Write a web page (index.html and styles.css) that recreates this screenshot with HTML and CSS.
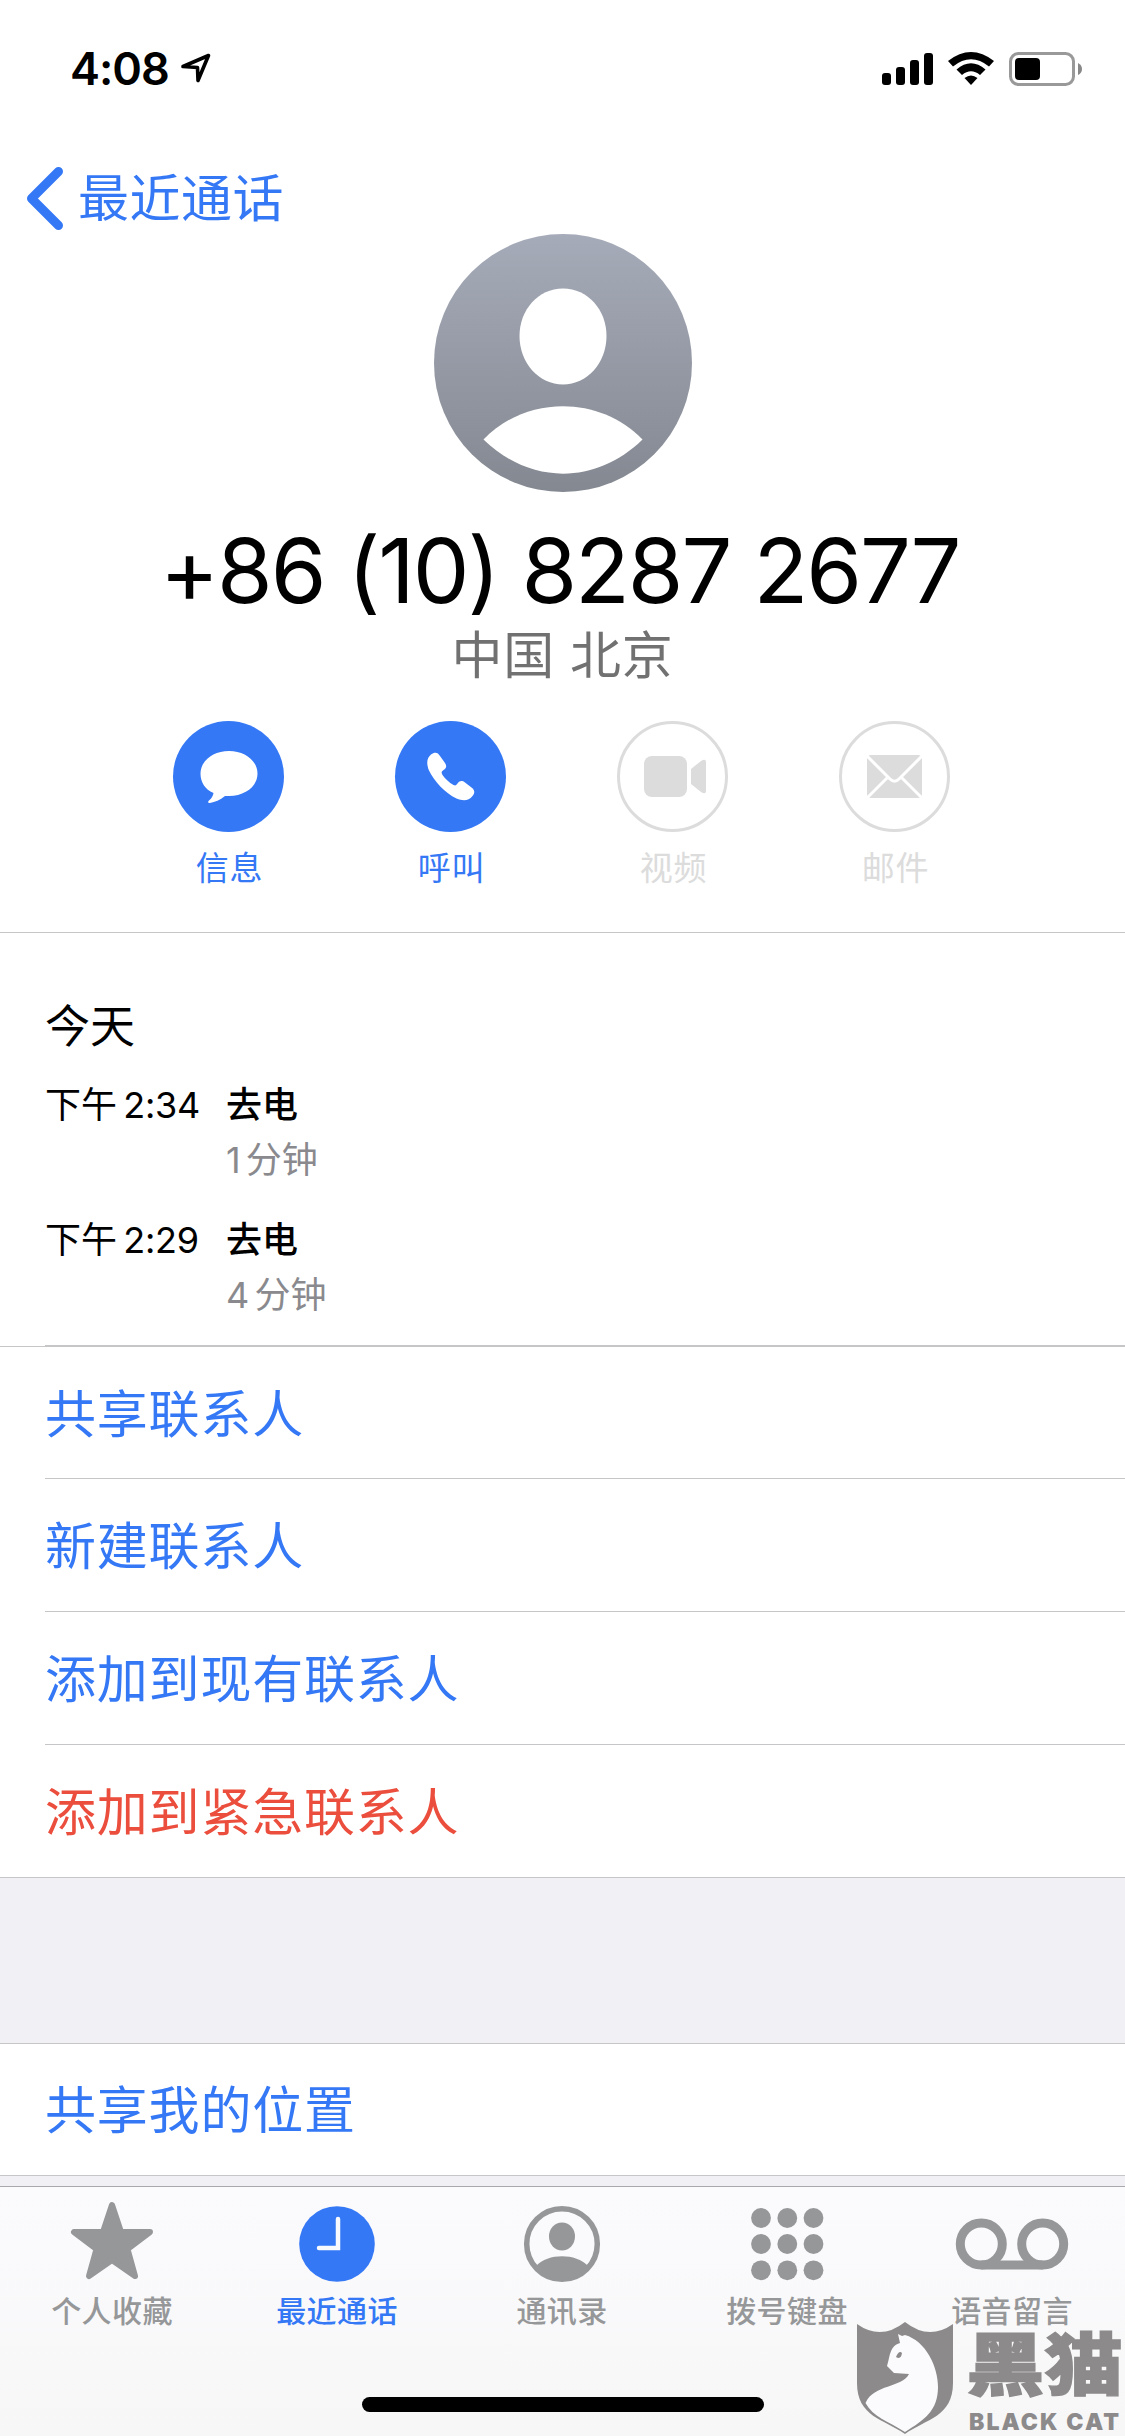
FILE: index.html
```
<!DOCTYPE html>
<html lang="zh-CN">
<head>
    <meta charset="UTF-8">
    <meta name="viewport" content="width=device-width, initial-scale=1.0">
    <title>最近通话</title>
    <link rel="stylesheet" href="styles.css">
</head>
<body>
    <div class="status-bar">
        <div class="clock">4:08</div>
        <svg class="location" width="32" height="32" viewBox="0 0 32 32">
            <path d="M3 14.5 L28.5 3.500 L18 28.500 L17.5 15.500 Z" fill="none" stroke="#000" stroke-width="3.6" stroke-linejoin="round"/>
        </svg>
        <svg class="indicators" width="202" height="36" viewBox="880 50 202 36">
            <rect x="882" y="73" width="9" height="12" rx="3"/>
            <rect x="896" y="67" width="9" height="18" rx="3"/>
            <rect x="910" y="60" width="9" height="25" rx="3"/>
            <rect x="924" y="53" width="9" height="32" rx="3"/>
            <path d="M948 61 Q971 43 994 61 L989 66.500 Q971 52 953 66.500 Z"/>
            <path d="M956.500 69.500 Q971 57 985.500 69.500 L980 75 Q971 67.500 962 75 Z"/>
            <path d="M964.500 78 Q971 73 977.500 78 L971 85 Z"/>
            <rect x="1010.500" y="53.500" width="63" height="31" rx="8" fill="none" stroke="#999" stroke-width="3"/>
            <rect x="1015" y="58" width="25" height="22" rx="4"/>
            <path d="M1078 63 Q1082 65 1082 69 Q1082 73 1078 75 Z" fill="#888"/>
        </svg>
    </div>

    <div class="header">
        <div class="back">
            <svg width="38" height="64" viewBox="0 0 38 64">
                <path d="M32.500 5.500 L5.500 32.500 L32.500 59.500" fill="none" stroke="#3478f6" stroke-width="9" stroke-linecap="round" stroke-linejoin="round"/>
            </svg>
            <span>最近通话</span>
        </div>

        <svg class="avatar" width="258" height="258" viewBox="0 0 258 258">
            <defs>
                <linearGradient id="avatarFill" x1="0" y1="0" x2="0" y2="1">
                    <stop offset="0" stop-color="#a6abb9"/>
                    <stop offset="1" stop-color="#848891"/>
                </linearGradient>
            </defs>
            <circle cx="129" cy="129" r="129" fill="url(#avatarFill)"/>
            <path d="M129 54.500 C154 54.500 172.500 76 172.500 102 C172.500 129 153 150.500 129 150.500 C105 150.500 85.500 129 85.500 102 C85.500 76 104 54.500 129 54.500 Z" fill="#fff"/>
            <path d="M49.500 205.500 C92 161 166 161 208.500 205.500 C162 251 96 251 49.500 205.500 Z" fill="#fff"/>
        </svg>

        <h1 class="number">+86 (10) 8287 2677</h1>
        <div class="region">中国 北京</div>

        <div class="actions">
            <div class="action">
                <svg width="111" height="111" viewBox="0 0 111 111">
                    <circle cx="55.500" cy="55.500" r="55.500" fill="#3478f6"/>
                    <path d="M56 30 C72 30 84.500 40 84.500 52.500 C84.500 65.500 72 75 56 75 L52 75 C47 79 42 81 37 82 C35 82 34.500 81 36 79.500 C39 77 40 74.500 40.500 72 C32 68.500 27.500 61 27.500 52.500 C27.500 40 40 30 56 30 Z" fill="#fff"/>
                </svg>
                <span>信息</span>
            </div>
            <div class="action">
                <svg width="111" height="111" viewBox="0 0 111 111">
                    <circle cx="55.500" cy="55.500" r="55.500" fill="#3478f6"/>
                    <path d="M36 33.500 C40 30.500 43 31.500 45 35 L50 42 C52 45 51.500 47 48.500 49 C46.500 50.500 46 51.500 47.500 54 C50.500 58 54 61.500 58.500 64 C60.500 65 61 64.500 62.500 62.500 C65 59.500 67 59.500 70 61.500 L76.500 66.500 C80 69 80 72 77.500 75 C73.500 80 68 80 61.500 77.500 C50 72 39 60 34 49.500 C31 42 32 37 36 33.500 Z" fill="#fff"/>
                </svg>
                <span>呼叫</span>
            </div>
            <div class="action disabled">
                <svg width="111" height="111" viewBox="0 0 111 111">
                    <circle cx="55.500" cy="55.500" r="54" fill="none" stroke="#dcdcdc" stroke-width="3"/>
                    <rect x="27" y="35" width="43" height="41" rx="8" fill="#dcdcdc"/>
                    <path d="M74 48 L84 40 Q89 37 89 41 V70 Q89 74 84 71 L74 63 Z" fill="#dcdcdc"/>
                </svg>
                <span>视频</span>
            </div>
            <div class="action disabled">
                <svg width="111" height="111" viewBox="0 0 111 111">
                    <circle cx="55.500" cy="55.500" r="54" fill="none" stroke="#dcdcdc" stroke-width="3"/>
                    <rect x="28" y="34" width="55" height="43" rx="4" fill="#dcdcdc"/>
                    <path d="M28 35 L51 58 Q55.500 62.500 60 58 L83 35 M28 77 L49 56 M83 77 L62 56" fill="none" stroke="#fff" stroke-width="3"/>
                </svg>
                <span>邮件</span>
            </div>
        </div>
    </div>

    <div class="history">
        <div class="calls">
            <h2>今天</h2>
            <div class="call">
                <div class="time">下午 <b>2:34</b></div>
                <div>
                    <div class="type">去电</div>
                    <div class="duration">1 分钟</div>
                </div>
            </div>
            <div class="call">
                <div class="time">下午 <b>2:29</b></div>
                <div>
                    <div class="type">去电</div>
                    <div class="duration">4 分钟</div>
                </div>
            </div>
        </div>
    </div>

    <div class="list">
        <div class="row">共享联系人</div>
        <div class="row">新建联系人</div>
        <div class="row">添加到现有联系人</div>
        <div class="row danger">添加到紧急联系人</div>
    </div>

    <div class="list location-list">
        <div class="row">共享我的位置</div>
    </div>

    <div class="tab-bar">
        <div class="tab">
            <svg width="112" height="80" viewBox="0 0 112 80">
                <path d="M56 0 L65 27 H94 L71.500 44 L79 71 L56 55 L33 71 L40.500 44 L18 27 H47 Z" fill="#969799" stroke="#969799" stroke-width="6" stroke-linejoin="round"/>
            </svg>
            <span>个人收藏</span>
        </div>
        <div class="tab active">
            <svg width="112" height="80" viewBox="0 0 112 80">
                <circle cx="56" cy="39" r="37.800" fill="#3478f6"/>
                <path d="M57 14 V43 H38" fill="none" stroke="#f8f9fc" stroke-width="4.500" stroke-linecap="round"/>
            </svg>
            <span>最近通话</span>
        </div>
        <div class="tab">
            <svg width="112" height="80" viewBox="0 0 112 80">
                <circle cx="56" cy="39" r="35.300" fill="none" stroke="#969799" stroke-width="5.500"/>
                <ellipse cx="56" cy="31.500" rx="13" ry="14" fill="#969799"/>
                <path d="M30 61 C42 48 70 48 82 61 C68 80 44 80 30 61 Z" fill="#969799"/>
            </svg>
            <span>通讯录</span>
        </div>
        <div class="tab">
            <svg width="112" height="80" viewBox="0 0 112 80">
                <g fill="#969799">
                    <circle cx="30" cy="13" r="9.900"/><circle cx="56.300" cy="13" r="9.900"/><circle cx="82.500" cy="13" r="9.900"/>
                    <circle cx="30" cy="39" r="9.900"/><circle cx="56.300" cy="39" r="9.900"/><circle cx="82.500" cy="39" r="9.900"/>
                    <circle cx="30" cy="65.300" r="9.900"/><circle cx="56.300" cy="65.300" r="9.900"/><circle cx="82.500" cy="65.300" r="9.900"/>
                </g>
            </svg>
            <span>拨号键盘</span>
        </div>
        <div class="tab">
            <svg width="112" height="80" viewBox="0 0 112 80">
                <g fill="none" stroke="#969799" stroke-width="9">
                    <circle cx="25.300" cy="39" r="21"/>
                    <circle cx="86.700" cy="39" r="21"/>
                    <path d="M25.300 60 H86.700"/>
                </g>
            </svg>
            <span>语音留言</span>
        </div>
        <div class="home-indicator"></div>
    </div>

    <div class="watermark">
        <svg width="98" height="114" viewBox="0 0 98 114">
            <path d="M1 3 Q25 20 49 1 Q73 20 97 3 V62 C97 96 70 98 49 113 C28 98 1 96 1 62 Z" fill="#8c8a8b"/>
            <path d="M42 13 L46 15 L49 14 C70 20 82 46 82 66 C82 90 68 99 49 111 C32 100 17 96 9.500 82 C18 63 46 67 53 53 L38 52 L31 45 C34 37 33 25 44 22 Z" fill="#fbfbfd"/>
            <path d="M40 36 Q43 29 46 32 Q45 39 40 36 Z" fill="#8c8a8b"/>
        </svg>
        <div class="brand">
            <div class="brand-cn">黑猫</div>
            <div class="brand-en">BLACK CAT</div>
        </div>
    </div>
</body>
</html>
```
FILE: styles.css
```
* {
    box-sizing: border-box;
}
body {
    margin: 0;
    width: 1125px;
    height: 2436px;
    overflow: hidden;
    position: relative;
    background: #f0f0f5;
    font-family: Inter, "Noto Sans CJK SC", sans-serif;
    color: #000;
}
h1, h2 {
    margin: 0;
    font-weight: 400;
}
svg {
    overflow: visible;
}
.status-bar {
    height: 132px;
    padding: 0 43px 0 70px;
    display: flex;
    align-items: flex-start;
    background: #fff;
}
.clock {
    width: 100px;
    margin-top: 42px;
    font-size: 45px;
    line-height: 54px;
    font-weight: 600;
    letter-spacing: -1px;
    white-space: nowrap;
}
.location {
    margin: 52px 0 0 10px;
}
.indicators {
    margin: 50px 0 0 auto;
}
.header {
    height: 801px;
    background: #fff;
    border-bottom: 1px solid #c6c6c8;
    display: flex;
    flex-direction: column;
    align-items: center;
}
.back {
    align-self: flex-start;
    height: 102px;
    padding: 34px 0 0 26px;
    display: flex;
    gap: 14px;
    color: #3478f6;
    font-size: 51px;
    line-height: 66px;
    letter-spacing: 0.5px;
}
.avatar {
    flex: none;
}
.number {
    height: 120px;
    margin-top: 20px;
    padding-right: 6px;
    font-size: 90px;
    line-height: 118px;
    letter-spacing: -2.1px;
    font-feature-settings: "calt" 0;
    white-space: nowrap;
}
.region {
    height: 60px;
    margin-top: -6px;
    color: #717171;
    font-size: 51px;
    line-height: 60px;
    letter-spacing: 0.7px;
}
.actions {
    display: flex;
    gap: 111px;
    margin-top: 35px;
    padding-right: 2px;
}
.action {
    width: 111px;
    display: flex;
    flex-direction: column;
    align-items: center;
    color: #3478f6;
    font-size: 33px;
    line-height: 40px;
    letter-spacing: 0.8px;
}
.action span {
    margin: 16px 0 0 2px;
}
.disabled {
    color: #dcdcdc;
}
.history {
    height: 413px;
    padding-left: 45px;
    background: #fff;
}
.calls {
    height: 413px;
    padding-top: 64px;
    border-bottom: 1px solid #c6c6c8;
}
.calls h2 {
    font-size: 45px;
    line-height: 60px;
}
.call {
    height: 135px;
    display: flex;
    padding-top: 21px;
    font-size: 36px;
    line-height: 55px;
}
.time {
    width: 181px;
    white-space: nowrap;
    word-spacing: -4px;
}
.time b {
    font-weight: 400;
    letter-spacing: -0.2px;
}
.type {
    font-weight: 500;
}
.duration {
    color: #8a8a8e;
    word-spacing: -5px;
}
.list {
    background: #fff;
    border-top: 1px solid #c6c6c8;
    border-bottom: 1px solid #c6c6c8;
}
.row {
    height: 133px;
    margin-left: 45px;
    color: #3478f6;
    font-size: 51px;
    line-height: 135px;
    letter-spacing: 0.8px;
    border-bottom: 1px solid #c6c6c8;
}
.row:first-child {
    height: 132px;
}
.row:last-child {
    height: 132px;
    border-bottom: none;
}
.danger {
    color: #eb4e3d;
}
.location-list {
    margin-top: 165px;
}
.location-list .row:last-child {
    height: 131px;
    line-height: 133px;
}
.tab-bar {
    position: absolute;
    left: 0;
    top: 2186px;
    width: 1125px;
    height: 250px;
    display: grid;
    grid-template-columns: repeat(5, 225px);
    background: linear-gradient(#fbfbfd, #f7f7f8);
    border-top: 1px solid #a8a8ad;
}
.tab {
    padding: 18px 1px 0 0;
    display: flex;
    flex-direction: column;
    align-items: center;
    color: #969799;
    font-size: 30px;
    line-height: 40px;
    font-weight: 500;
    letter-spacing: 0.4px;
}
.tab span {
    margin-top: 6px;
}
.active {
    color: #3478f6;
}
.home-indicator {
    position: absolute;
    left: 362px;
    bottom: 24px;
    width: 402px;
    height: 15px;
    border-radius: 8px;
    background: #000;
}
.watermark {
    position: absolute;
    left: 856px;
    top: 2321px;
    display: flex;
    gap: 15px;
    color: #8c8a8b;
}
.brand {
    white-space: nowrap;
}
/* flattened so the characters come out wider than tall */
.brand-cn {
    height: 88px;
    font-size: 76px;
    line-height: 88px;
    font-weight: 900;
    -webkit-text-stroke: 1.5px #8c8a8b;
    transform: scale(1.03, 0.9);
    transform-origin: 60% 50%;
}
.brand-en {
    font-size: 23px;
    line-height: 26px;
    font-weight: 900;
    letter-spacing: 2.1px;
}
```
